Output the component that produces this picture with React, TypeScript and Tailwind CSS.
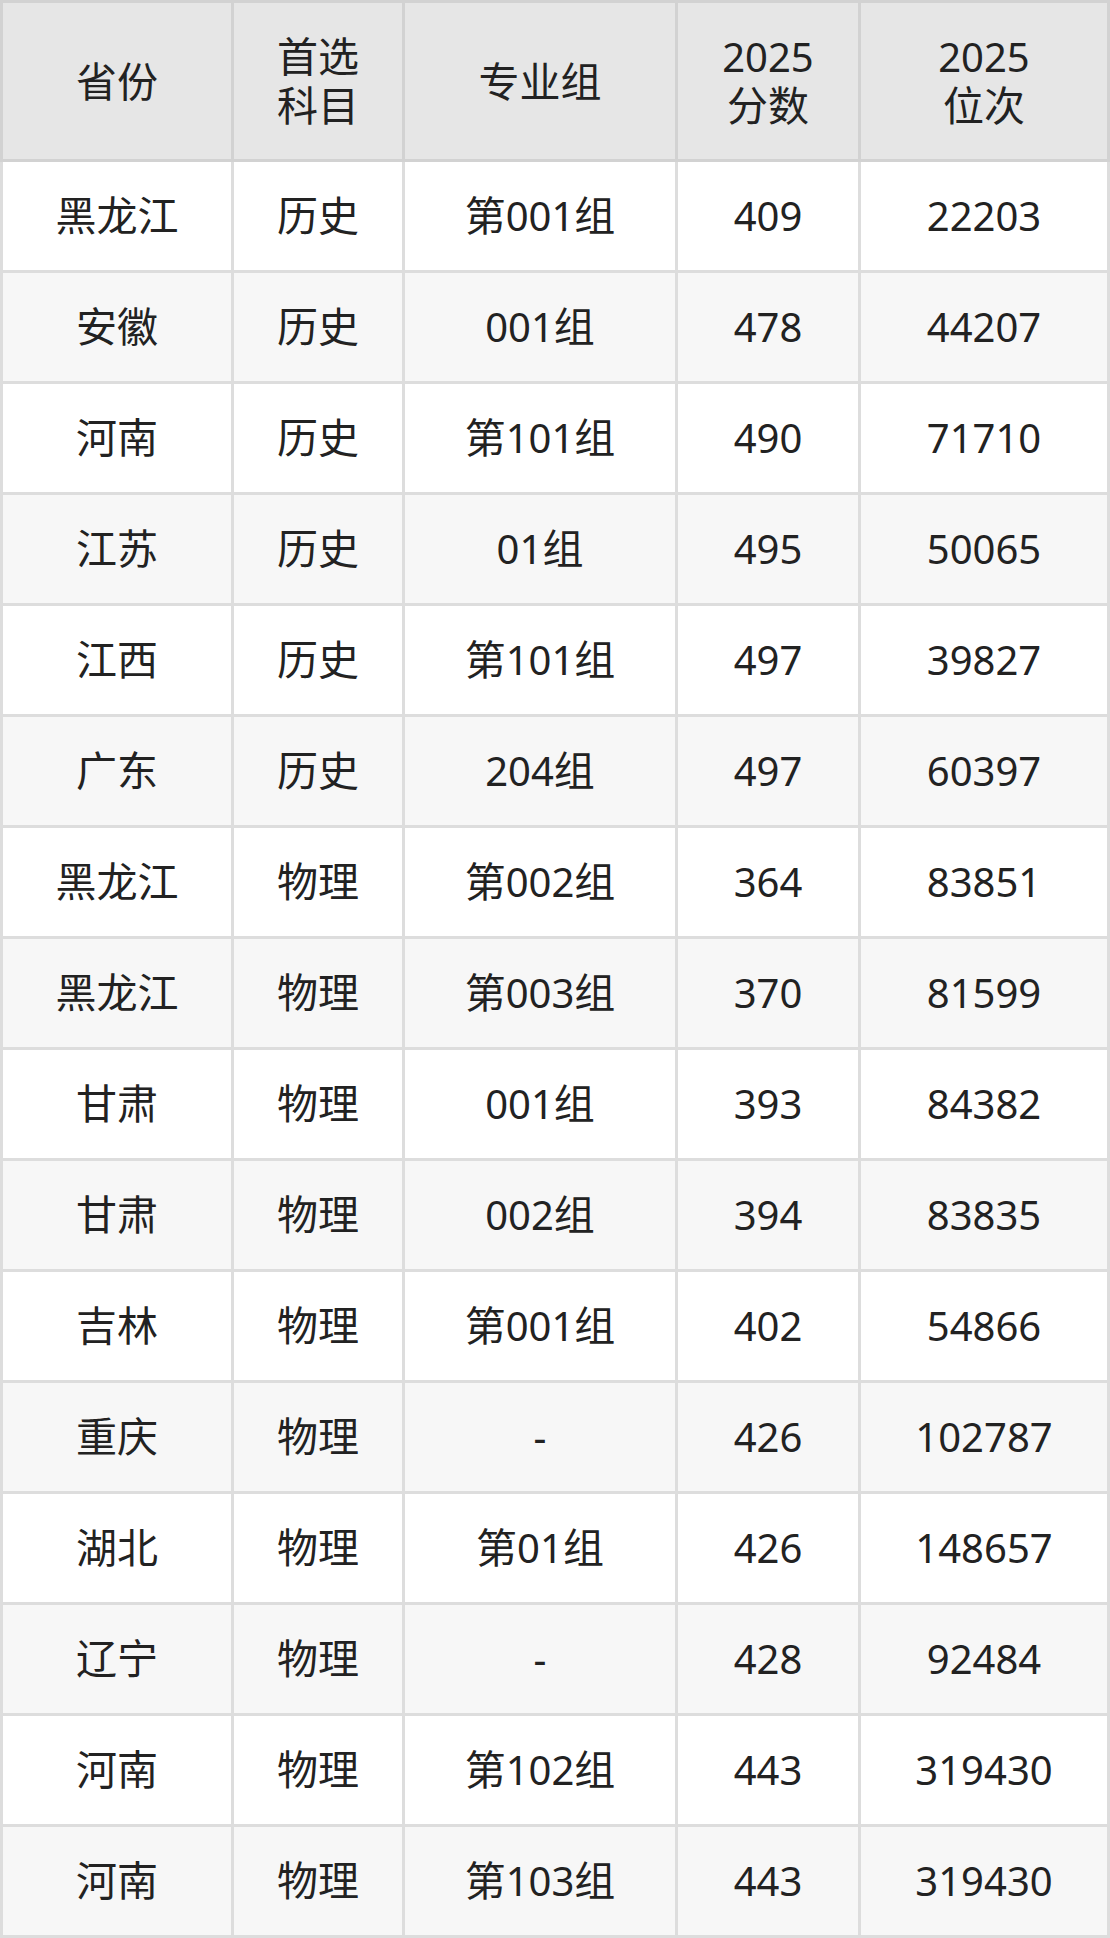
import React from "react";

const rows: string[][] = [
  ["黑龙江", "历史", "第001组", "409", "22203"],
  ["安徽", "历史", "001组", "478", "44207"],
  ["河南", "历史", "第101组", "490", "71710"],
  ["江苏", "历史", "01组", "495", "50065"],
  ["江西", "历史", "第101组", "497", "39827"],
  ["广东", "历史", "204组", "497", "60397"],
  ["黑龙江", "物理", "第002组", "364", "83851"],
  ["黑龙江", "物理", "第003组", "370", "81599"],
  ["甘肃", "物理", "001组", "393", "84382"],
  ["甘肃", "物理", "002组", "394", "83835"],
  ["吉林", "物理", "第001组", "402", "54866"],
  ["重庆", "物理", "-", "426", "102787"],
  ["湖北", "物理", "第01组", "426", "148657"],
  ["辽宁", "物理", "-", "428", "92484"],
  ["河南", "物理", "第102组", "443", "319430"],
  ["河南", "物理", "第103组", "443", "319430"],
];

const headers: string[][] = [["省份"], ["首选", "科目"], ["专业组"], ["2025", "分数"], ["2025", "位次"]];

function Txt({ s }: { s: string }) {
  const parts = s.match(/[\u4e00-\u9fff]+|[^\u4e00-\u9fff]+/g) || [];
  return (
    <span>
      {parts.map((p, i) =>
        /[\u4e00-\u9fff]/.test(p) ? (
          <span key={i} className="text-[41px]">
            {p}
          </span>
        ) : (
          <span key={i} className="text-[40px]">
            {p}
          </span>
        )
      )}
    </span>
  );
}

export default function App() {
  return (
    <div
      className="w-[1110px] text-[#222222] text-[40px]"
      style={{ fontFamily: '"Noto Sans", "Noto Sans CJK SC", sans-serif' }}
    >
      <div className="grid grid-cols-[228px_168px_270px_180px_246px] gap-[3px] bg-[#d2d2d2] p-[3px]">
        {headers.map((h, i) => (
          <div key={i} className="h-[156px] bg-[#e6e6e6] flex flex-col items-center justify-center leading-[49px]">
            {h.map((l, j) => (
              <Txt key={j} s={l} />
            ))}
          </div>
        ))}
      </div>
      <div className="grid grid-cols-[228px_168px_270px_180px_246px] gap-[3px] bg-[#dddddd] px-[3px] pb-[3px]">
        {rows.map((r, ri) =>
          r.map((c, ci) => (
            <div
              key={ri + "-" + ci}
              className={
                "h-[108px] flex items-center justify-center " + (ri % 2 === 0 ? "bg-white" : "bg-[#f7f7f7]")
              }
            >
              <Txt s={c} />
            </div>
          ))
        )}
      </div>
    </div>
  );
}
